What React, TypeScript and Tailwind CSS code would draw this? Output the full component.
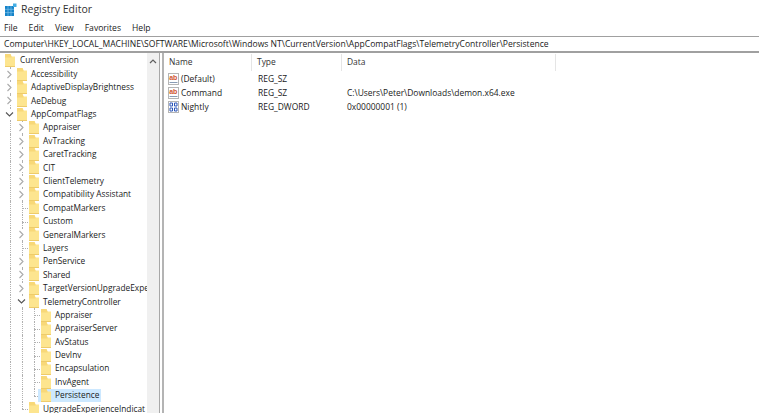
import React from "react";

const Folder = () => (
  <svg width="10" height="13" viewBox="0 0 10 13" className="shrink-0">
    <path d="M0 0 H5.5 L6.5 2.5 H10 V13 H0 Z" fill="#fde58f" />
    <path d="M0 0 H5.5 L6.5 2.5 V3.5 H0 Z" fill="#f8d878" />
    <path d="M0 12.5 H10" stroke="#eecb6a" strokeWidth="1" />
  </svg>
);

const Chevron = ({ open }: { open?: boolean }) => (
  <svg width="9" height="9" viewBox="0 0 9 9" className="shrink-0">
    {open ? (
      <path d="M1 2.5 L4.5 6 L8 2.5" fill="none" stroke="#555" strokeWidth="1.1" />
    ) : (
      <path d="M2.5 1 L6 4.5 L2.5 8" fill="none" stroke="#aaa" strokeWidth="1.1" />
    )}
  </svg>
);

const AbIcon = () => (
  <svg width="11" height="12" viewBox="0 0 11 12" className="shrink-0">
    <rect x="0.5" y="0.5" width="10" height="11" fill="#fff" stroke="#b5b5b5" />
    <text x="1.2" y="7.2" fontSize="7" fontWeight="700" fill="#d0552f" fontFamily="Liberation Sans, sans-serif">ab</text>
    <path d="M1.5 9.5 H9.5" stroke="#8a9cb4" />
  </svg>
);

const BinIcon = () => (
  <svg width="11" height="12" viewBox="0 0 11 12" className="shrink-0">
    <rect x="0.5" y="0.5" width="10" height="11" fill="#fff" stroke="#b5b5b5" />
    <path d="M2 2 H4.5 V5 H2 Z M6.5 2 H9 V5 H6.5 Z M2 7 H4.5 V10 H2 Z M6.5 7 H9 V10 H6.5 Z" fill="none" stroke="#2a55b8" />
  </svg>
);

const tree: { label: string; depth: number; arrow?: "open" | "closed"; selected?: boolean; last?: boolean }[] = [
  { label: "Accessibility", depth: 1, arrow: "closed" },
  { label: "AdaptiveDisplayBrightness", depth: 1, arrow: "closed" },
  { label: "AeDebug", depth: 1, arrow: "closed" },
  { label: "AppCompatFlags", depth: 1, arrow: "open" },
  { label: "Appraiser", depth: 2, arrow: "closed" },
  { label: "AvTracking", depth: 2, arrow: "closed" },
  { label: "CaretTracking", depth: 2, arrow: "closed" },
  { label: "CIT", depth: 2, arrow: "closed" },
  { label: "ClientTelemetry", depth: 2, arrow: "closed" },
  { label: "Compatibility Assistant", depth: 2, arrow: "closed" },
  { label: "CompatMarkers", depth: 2 },
  { label: "Custom", depth: 2 },
  { label: "GeneralMarkers", depth: 2, arrow: "closed" },
  { label: "Layers", depth: 2 },
  { label: "PenService", depth: 2, arrow: "closed" },
  { label: "Shared", depth: 2, arrow: "closed" },
  { label: "TargetVersionUpgradeExpe", depth: 2, arrow: "closed" },
  { label: "TelemetryController", depth: 2, arrow: "open" },
  { label: "Appraiser", depth: 3 },
  { label: "AppraiserServer", depth: 3 },
  { label: "AvStatus", depth: 3 },
  { label: "DevInv", depth: 3 },
  { label: "Encapsulation", depth: 3 },
  { label: "InvAgent", depth: 3 },
  { label: "Persistence", depth: 3, selected: true, last: true },
  { label: "UpgradeExperienceIndicat", depth: 2 },
];

const rows = [
  { icon: <AbIcon />, name: "(Default)", type: "REG_SZ", data: "" },
  { icon: <AbIcon />, name: "Command", type: "REG_SZ", data: "C:\\Users\\Peter\\Downloads\\demon.x64.exe" },
  { icon: <BinIcon />, name: "Nightly", type: "REG_DWORD", data: "0x00000001 (1)" },
];

const Guide = ({ className }: { className: string }) => (
  <span className={"absolute border-dotted border-[#b0b0b0] " + className} />
);

export default function App() {
  return (
    <div className="w-[759px] h-[413px] bg-white overflow-hidden flex flex-col text-[8.6px] text-[#1a1a1a] font-['Open_Sans','Liberation_Sans',sans-serif]">
      <div className="h-[20px] shrink-0 flex items-center gap-[4px] pl-[5px] text-[10.5px] text-[#333]">
        <svg width="12" height="14" viewBox="0 0 12 14">
          <rect x="0" y="3" width="9" height="10" fill="#1583c9" />
          <path d="M3 3 V13 M6 3 V13 M0 6.3 H9 M0 9.6 H9" stroke="#7fc0e8" strokeWidth="0.7" />
          <rect x="8" y="0.5" width="3.5" height="3.5" fill="#45aee4" />
        </svg>
        <span>Registry Editor</span>
      </div>
      <div className="h-[16px] shrink-0 flex items-center gap-[11px] pl-[4px] pt-[1px]">
        <span>File</span>
        <span>Edit</span>
        <span>View</span>
        <span>Favorites</span>
        <span>Help</span>
      </div>
      <div className="h-[17px] shrink-0 flex items-center pl-[4px] text-[8.57px] border-t border-b-2 border-[#a0a0a0] whitespace-nowrap">
        Computer\HKEY_LOCAL_MACHINE\SOFTWARE\Microsoft\Windows NT\CurrentVersion\AppCompatFlags\TelemetryController\Persistence
      </div>
      <div className="flex-1 flex min-h-0">
        <div className="w-[160px] shrink-0 flex border-r border-[#a8a8a8]">
          <div className="w-[147px] overflow-hidden pt-[1px] text-[8.3px]">
            <div className="h-[13.4px] flex items-center gap-[5px] pl-[5px] whitespace-nowrap">
              <Folder />
              <span>CurrentVersion</span>
            </div>
            {tree.map((t, i) => (
              <div key={i} className="relative h-[13.4px] flex items-center whitespace-nowrap">
                <Guide className="left-[10px] top-0 bottom-0 border-l" />
                {t.depth >= 2 && i < 25 ? <Guide className="left-[22px] top-0 bottom-0 border-l" /> : null}
                {t.depth === 2 && i === 25 ? <Guide className="left-[22px] top-0 h-[7px] border-l" /> : null}
                {t.depth === 2 && !t.arrow ? <Guide className="left-[22px] top-[7px] w-[6px] border-t" /> : null}
                {t.depth === 3 ? <Guide className={t.last ? "left-[34px] top-0 h-[7px] border-l" : "left-[34px] top-0 bottom-0 border-l"} /> : null}
                {t.depth === 3 ? <Guide className="left-[34px] top-[7px] w-[6px] border-t" /> : null}
                <div
                  className={
                    t.depth === 1
                      ? "relative w-[17px] shrink-0 flex justify-start pl-[5px] bg-transparent"
                      : t.depth === 2
                      ? "relative w-[29px] shrink-0 flex justify-start pl-[17px]"
                      : "relative w-[41px] shrink-0"
                  }
                >
                  {t.arrow ? (
                    <span className="bg-white">
                      <Chevron open={t.arrow === "open"} />
                    </span>
                  ) : null}
                </div>
                <div
                  className={
                    t.selected
                      ? "relative flex items-center gap-[4px] bg-[#cce8ff] pr-[2px] -ml-[3px] pl-[3px]"
                      : "relative flex items-center gap-[4px]"
                  }
                >
                  <Folder />
                  <span>{t.label}</span>
                </div>
              </div>
            ))}
          </div>
          <div className="w-[12px] bg-[#f0f0f0] flex justify-center pt-[5px]">
            <svg width="8" height="6" viewBox="0 0 8 6">
              <path d="M1 5 L4 2 L7 5" fill="none" stroke="#606060" strokeWidth="1.2" />
            </svg>
          </div>
        </div>
        <div className="w-[2px] shrink-0 bg-white" />
        <div className="flex-1 min-w-0 border-l-2 border-[#b4b4b4] text-[8.45px] pt-[1px]">
          <div className="h-[17px] flex items-center text-[#333]">
            <div className="w-[88px] pl-[5px] h-full flex items-center border-r border-[#e5e5e5]">Name</div>
            <div className="w-[90px] pl-[5px] h-full flex items-center border-r border-[#e5e5e5]">Type</div>
            <div className="w-[214px] pl-[5px] h-full flex items-center border-r border-[#e5e5e5]">Data</div>
          </div>
          <div className="pt-[1px]">
            {rows.map((r) => (
              <div key={r.name} className="h-[14px] flex items-center">
                <div className="w-[88px] pl-[4px] flex items-center gap-[2px]">
                  {r.icon}
                  <span>{r.name}</span>
                </div>
                <div className="w-[90px] pl-[6px]">{r.type}</div>
                <div className="pl-[5px]">{r.data}</div>
              </div>
            ))}
          </div>
        </div>
      </div>
    </div>
  );
}
